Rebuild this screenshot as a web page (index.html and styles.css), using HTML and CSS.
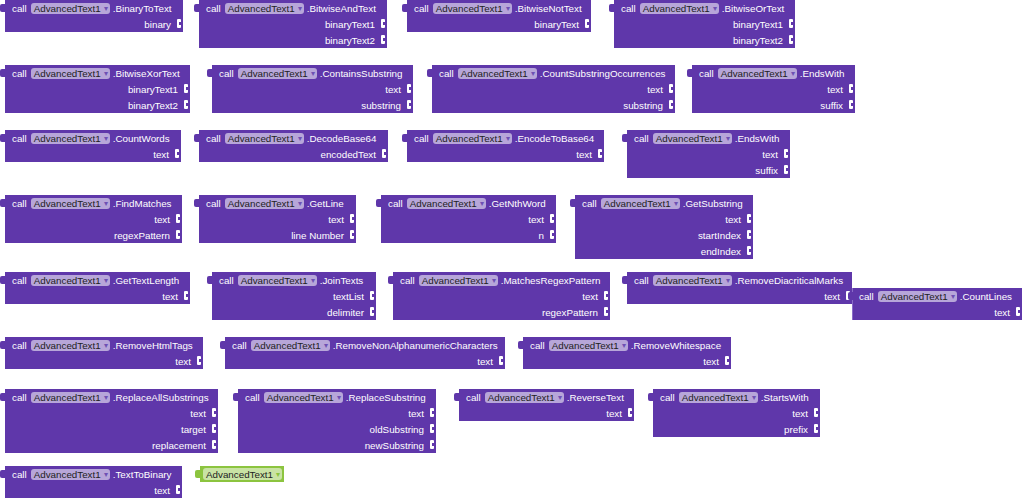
FILE: index.html
```html
<!DOCTYPE html>
<html>
<head>
<meta charset="utf-8">
<link rel="stylesheet" href="styles.css">
</head>
<body>
<div class="ws">
  <div class="blk p1"><div class="hdr"><span class="call">call</span><span class="pill">AdvancedText1<i class="arr">▾</i></span><span class="meth">.BinaryToText</span></div><div class="in">binary</div></div>
  <div class="blk p2"><div class="hdr"><span class="call">call</span><span class="pill">AdvancedText1<i class="arr">▾</i></span><span class="meth">.BitwiseAndText</span></div><div class="in">binaryText1</div><div class="in">binaryText2</div></div>
  <div class="blk p3"><div class="hdr"><span class="call">call</span><span class="pill">AdvancedText1<i class="arr">▾</i></span><span class="meth">.BitwiseNotText</span></div><div class="in">binaryText</div></div>
  <div class="blk p4"><div class="hdr"><span class="call">call</span><span class="pill">AdvancedText1<i class="arr">▾</i></span><span class="meth">.BitwiseOrText</span></div><div class="in">binaryText1</div><div class="in">binaryText2</div></div>

  <div class="blk p5"><div class="hdr"><span class="call">call</span><span class="pill">AdvancedText1<i class="arr">▾</i></span><span class="meth">.BitwiseXorText</span></div><div class="in">binaryText1</div><div class="in">binaryText2</div></div>
  <div class="blk p6"><div class="hdr"><span class="call">call</span><span class="pill">AdvancedText1<i class="arr">▾</i></span><span class="meth">.ContainsSubstring</span></div><div class="in">text</div><div class="in">substring</div></div>
  <div class="blk p7"><div class="hdr"><span class="call">call</span><span class="pill">AdvancedText1<i class="arr">▾</i></span><span class="meth">.CountSubstringOccurrences</span></div><div class="in">text</div><div class="in">substring</div></div>
  <div class="blk p8"><div class="hdr"><span class="call">call</span><span class="pill">AdvancedText1<i class="arr">▾</i></span><span class="meth">.EndsWith</span></div><div class="in">text</div><div class="in">suffix</div></div>

  <div class="blk p9"><div class="hdr"><span class="call">call</span><span class="pill">AdvancedText1<i class="arr">▾</i></span><span class="meth">.CountWords</span></div><div class="in">text</div></div>
  <div class="blk p10"><div class="hdr"><span class="call">call</span><span class="pill">AdvancedText1<i class="arr">▾</i></span><span class="meth">.DecodeBase64</span></div><div class="in">encodedText</div></div>
  <div class="blk p11"><div class="hdr"><span class="call">call</span><span class="pill">AdvancedText1<i class="arr">▾</i></span><span class="meth">.EncodeToBase64</span></div><div class="in">text</div></div>
  <div class="blk p12"><div class="hdr"><span class="call">call</span><span class="pill">AdvancedText1<i class="arr">▾</i></span><span class="meth">.EndsWith</span></div><div class="in">text</div><div class="in">suffix</div></div>

  <div class="blk p13"><div class="hdr"><span class="call">call</span><span class="pill">AdvancedText1<i class="arr">▾</i></span><span class="meth">.FindMatches</span></div><div class="in">text</div><div class="in">regexPattern</div></div>
  <div class="blk p14"><div class="hdr"><span class="call">call</span><span class="pill">AdvancedText1<i class="arr">▾</i></span><span class="meth">.GetLine</span></div><div class="in">text</div><div class="in">line Number</div></div>
  <div class="blk p15"><div class="hdr"><span class="call">call</span><span class="pill">AdvancedText1<i class="arr">▾</i></span><span class="meth">.GetNthWord</span></div><div class="in">text</div><div class="in">n</div></div>
  <div class="blk p16"><div class="hdr"><span class="call">call</span><span class="pill">AdvancedText1<i class="arr">▾</i></span><span class="meth">.GetSubstring</span></div><div class="in">text</div><div class="in">startIndex</div><div class="in">endIndex</div></div>

  <div class="blk p17"><div class="hdr"><span class="call">call</span><span class="pill">AdvancedText1<i class="arr">▾</i></span><span class="meth">.GetTextLength</span></div><div class="in">text</div></div>
  <div class="blk p18"><div class="hdr"><span class="call">call</span><span class="pill">AdvancedText1<i class="arr">▾</i></span><span class="meth">.JoinTexts</span></div><div class="in">textList</div><div class="in">delimiter</div></div>
  <div class="blk p19"><div class="hdr"><span class="call">call</span><span class="pill">AdvancedText1<i class="arr">▾</i></span><span class="meth">.MatchesRegexPattern</span></div><div class="in">text</div><div class="in">regexPattern</div></div>
  <div class="blk p20"><div class="hdr"><span class="call">call</span><span class="pill">AdvancedText1<i class="arr">▾</i></span><span class="meth">.RemoveDiacriticalMarks</span></div><div class="in">text</div></div>
  <div class="blk p21 child"><div class="hdr"><span class="call">call</span><span class="pill">AdvancedText1<i class="arr">▾</i></span><span class="meth">.CountLines</span></div><div class="in">text</div></div>

  <div class="blk p22"><div class="hdr"><span class="call">call</span><span class="pill">AdvancedText1<i class="arr">▾</i></span><span class="meth">.RemoveHtmlTags</span></div><div class="in">text</div></div>
  <div class="blk p23"><div class="hdr"><span class="call">call</span><span class="pill">AdvancedText1<i class="arr">▾</i></span><span class="meth">.RemoveNonAlphanumericCharacters</span></div><div class="in">text</div></div>
  <div class="blk p24"><div class="hdr"><span class="call">call</span><span class="pill">AdvancedText1<i class="arr">▾</i></span><span class="meth">.RemoveWhitespace</span></div><div class="in">text</div></div>

  <div class="blk p25"><div class="hdr"><span class="call">call</span><span class="pill">AdvancedText1<i class="arr">▾</i></span><span class="meth">.ReplaceAllSubstrings</span></div><div class="in">text</div><div class="in">target</div><div class="in">replacement</div></div>
  <div class="blk p26"><div class="hdr"><span class="call">call</span><span class="pill">AdvancedText1<i class="arr">▾</i></span><span class="meth">.ReplaceSubstring</span></div><div class="in">text</div><div class="in">oldSubstring</div><div class="in">newSubstring</div></div>
  <div class="blk p27"><div class="hdr"><span class="call">call</span><span class="pill">AdvancedText1<i class="arr">▾</i></span><span class="meth">.ReverseText</span></div><div class="in">text</div></div>
  <div class="blk p28"><div class="hdr"><span class="call">call</span><span class="pill">AdvancedText1<i class="arr">▾</i></span><span class="meth">.StartsWith</span></div><div class="in">text</div><div class="in">prefix</div></div>

  <div class="blk p29"><div class="hdr"><span class="call">call</span><span class="pill">AdvancedText1<i class="arr">▾</i></span><span class="meth">.TextToBinary</span></div><div class="in">text</div></div>
  <div class="blk green p30"><span class="pill gpill">AdvancedText1<i class="arr garr">▾</i></span></div>
</div>
</body>
</html>
```

FILE: styles.css
```css
html, body {
  margin: 0;
  padding: 0;
  background: #ffffff;
}
body {
  font-family: "Liberation Sans", Arial, sans-serif;
  font-size: 9.8px;
  color: #ffffff;
}
.ws {
  position: relative;
  width: 1024px;
  height: 498px;
  overflow: hidden;
}
.blk {
  position: absolute;
  background: #5f37aa;
  display: flex;
  flex-direction: column;
  box-sizing: border-box;
}
.blk::before {
  content: "";
  position: absolute;
  left: -5px;
  top: 4px;
  width: 5px;
  height: 8px;
  background: #5f37aa;
  border-radius: 2px 0 0 2px;
}
.hdr {
  height: 16px;
  display: flex;
  align-items: center;
  padding-left: 7px;
  white-space: nowrap;
}
.call {
  margin-right: 4px;
}
.pill {
  display: flex;
  align-items: center;
  height: 11px;
  padding: 0 2px 0 3px;
  border-radius: 3px;
  background: #b7a6d9;
  color: #222222;
  white-space: nowrap;
}
.arr {
  font-style: normal;
  font-size: 8px;
  color: #6e51b3;
  margin-left: 3px;
}
.meth {
  margin-left: 3px;
}
.in {
  position: relative;
  height: 16px;
  display: flex;
  align-items: center;
  justify-content: flex-end;
  padding-right: 12px;
  white-space: nowrap;
}
.in::after {
  content: "";
  position: absolute;
  right: 2px;
  top: 3px;
  width: 4px;
  height: 9px;
  background: #ffffff;
  border-radius: 1px;
}
.in::before {
  content: "";
  position: absolute;
  right: 2px;
  top: 6px;
  width: 2px;
  height: 3px;
  background: #5f37aa;
  z-index: 1;
}
.child {
  border-left: 1px solid #8a6cc8;
}
.child .hdr {
  padding-left: 6px;
}
.green {
  background: #8cc43f;
  height: 16px;
  flex-direction: row;
  align-items: center;
  padding-left: 3px;
}
.green::before {
  background: #8cc43f;
}
.gpill {
  background: #c9e3a4;
  height: 12px;
}
.garr {
  color: #8cc43f;
}

.p1 { left: 5px; top: 0; width: 178px; }
.p2 { left: 199px; top: 0; width: 188px; }
.p3 { left: 407px; top: 0; width: 184px; }
.p4 { left: 614px; top: 0; width: 181px; }
.p5 { left: 5px; top: 65px; width: 185px; }
.p6 { left: 212px; top: 65px; width: 201px; }
.p7 { left: 432px; top: 65px; width: 243px; }
.p8 { left: 692px; top: 65px; width: 163px; }
.p9 { left: 5px; top: 130px; width: 176px; }
.p10 { left: 199px; top: 130px; width: 189px; }
.p11 { left: 407px; top: 130px; width: 197px; }
.p12 { left: 627px; top: 130px; width: 163px; }
.p13 { left: 5px; top: 195px; width: 177px; }
.p14 { left: 199px; top: 195px; width: 157px; }
.p15 { left: 381px; top: 195px; width: 175px; }
.p16 { left: 575px; top: 195px; width: 178px; }
.p17 { left: 5px; top: 272px; width: 185px; }
.p18 { left: 212px; top: 272px; width: 164px; }
.p19 { left: 393px; top: 272px; width: 217px; }
.p20 { left: 627px; top: 272px; width: 225px; }
.p21 { left: 852px; top: 288px; width: 170px; }
.p22 { left: 5px; top: 337px; width: 198px; }
.p23 { left: 225px; top: 337px; width: 280px; }
.p24 { left: 523px; top: 337px; width: 208px; }
.p25 { left: 5px; top: 389px; width: 213px; }
.p26 { left: 238px; top: 389px; width: 198px; }
.p27 { left: 459px; top: 389px; width: 175px; }
.p28 { left: 653px; top: 389px; width: 167px; }
.p29 { left: 5px; top: 466px; width: 177px; }
.p30 { left: 200px; top: 466px; width: 84px; }
```
